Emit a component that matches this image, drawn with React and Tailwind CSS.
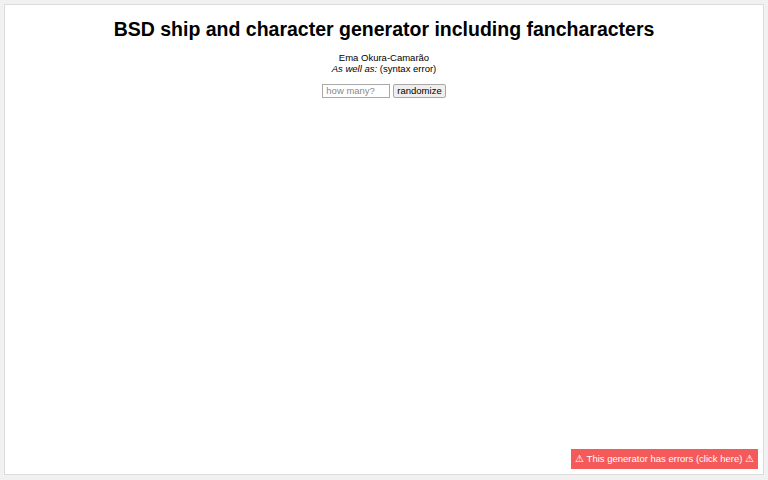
import React from 'react';

export default function App() {
  return (
    <div className="h-[480px] w-[768px] bg-[#f1f1f1] p-[4px] font-['Liberation_Sans',Arial,sans-serif] text-black">
      <div className="relative flex h-[471px] flex-col items-center border border-[#dcdcdc] bg-white">
        <h1 className="mt-[12px] text-[19.5px] font-bold leading-[24px]">
          BSD ship and character generator including fancharacters
        </h1>
        <div className="mt-[11px] text-center text-[9.5px] leading-[11px]">
          <div>Ema Okura-Camarão</div>
          <div>
            <i>As well as:</i> (syntax error)
          </div>
        </div>
        <div className="mt-[10px] flex items-center gap-[3px] text-[9.5px]">
          <input
            placeholder="how many?"
            className="h-[14px] w-[68px] border border-[#a9a9a9] px-[3px] text-[9.5px] placeholder:text-[#8a8a8a] outline-none"
          />
          <button className="h-[14px] rounded-[2px] border border-[#a9a9a9] bg-[#efefef] px-[3px] text-[9.5px] leading-[12px]">
            randomize
          </button>
        </div>
        <button className="absolute bottom-[5px] right-[5px] h-[20px] bg-[#f45a5a] px-[4px] text-[9.5px] text-white">
          ⚠ This generator has errors (click here) ⚠
        </button>
      </div>
    </div>
  );
}
